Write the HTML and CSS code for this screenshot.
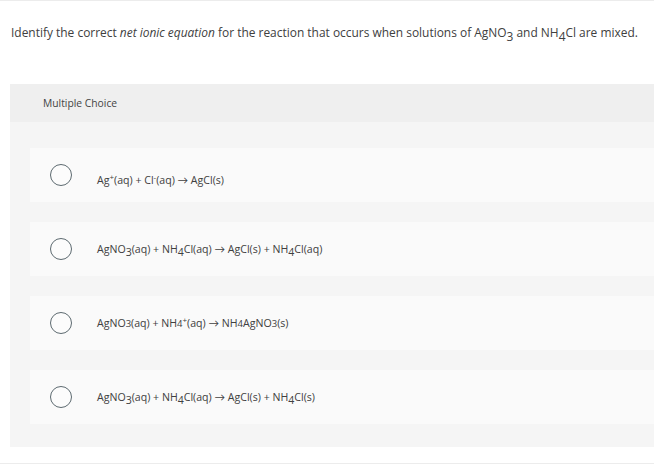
FILE: index.html
```html
<!DOCTYPE html>
<html>
<head>
<meta charset="utf-8">
<link rel="stylesheet" href="styles.css">
</head>
<body>
<div class="page">
  <p class="question">Identify the correct <em>net ionic equation</em> for the reaction that occurs when solutions of AgNO<sub>3</sub> and NH<sub>4</sub>Cl are mixed.</p>
  <div class="panel">
    <div class="panel-head">Multiple Choice</div>
    <div class="options">
      <div class="option">
        <span class="radio"></span>
        <span class="eq eq-first">Ag<sup>+</sup>(aq) + Cl<sup>-</sup>(aq) &#8594; AgCl(s)</span>
      </div>
      <div class="option">
        <span class="radio"></span>
        <span class="eq">AgNO<sub>3</sub>(aq) + NH<sub>4</sub>Cl(aq) &#8594; AgCl(s) + NH<sub>4</sub>Cl(aq)</span>
      </div>
      <div class="option">
        <span class="radio"></span>
        <span class="eq">AgNO<span class="sm">3</span>(aq) + NH<span class="sm">4</span><sup>+</sup>(aq) &#8594; NH<span class="sm">4</span>AgNO<span class="sm">3</span>(s)</span>
      </div>
      <div class="option">
        <span class="radio"></span>
        <span class="eq">AgNO<sub>3</sub>(aq) + NH<sub>4</sub>Cl(aq) &#8594; AgCl(s) + NH<sub>4</sub>Cl(s)</span>
      </div>
    </div>
  </div>
</div>
</body>
</html>
```

FILE: styles.css
```css
* { box-sizing: border-box; }
html, body { margin: 0; padding: 0; background: #fff; }
body {
  font-family: "Open Sans", "Lato", sans-serif;
  color: #333;
  width: 654px;
  height: 465px;
  overflow: hidden;
}
.page {
  border-top: 1px solid #ececec;
  border-bottom: 1px solid #ececec;
  height: 464px;
  padding-top: 23px;
}
.question {
  margin: 0 0 0 11px;
  font-size: 11.95px;
  line-height: 17px;
  color: #404040;
  white-space: nowrap;
}
.question em { font-style: italic; }
.question sub { font-size: 11.95px; vertical-align: -4px; line-height: 0; }
.panel {
  margin: 43px 0 0 10px;
  background: #f5f5f5;
  padding-bottom: 23px;
}
.panel-head {
  background: #efefef;
  height: 38px;
  padding-left: 33px;
  display: flex;
  align-items: center;
  font-size: 10.3px;
  color: #444;
}
.options {
  display: flex;
  flex-direction: column;
  gap: 20px;
  padding: 26px 0 0 20px;
}
.option {
  background: #fafafa;
  height: 54px;
  display: flex;
  align-items: center;
  padding-left: 20px;
}
.radio {
  width: 22px;
  height: 22px;
  border-radius: 50%;
  border: 1.5px solid #5d6a70;
  background: #fcfcfc;
  flex: none;
}
.eq {
  margin-left: 25px;
  font-size: 10.6px;
  color: #404040;
  white-space: nowrap;
}
.eq-first { margin-top: 9px; }
.eq sub { font-size: 10.6px; vertical-align: -3px; line-height: 0; }
.eq sup { font-size: 8px; vertical-align: 4px; line-height: 0; }
.eq .sm { font-size: 9.5px; }
```
